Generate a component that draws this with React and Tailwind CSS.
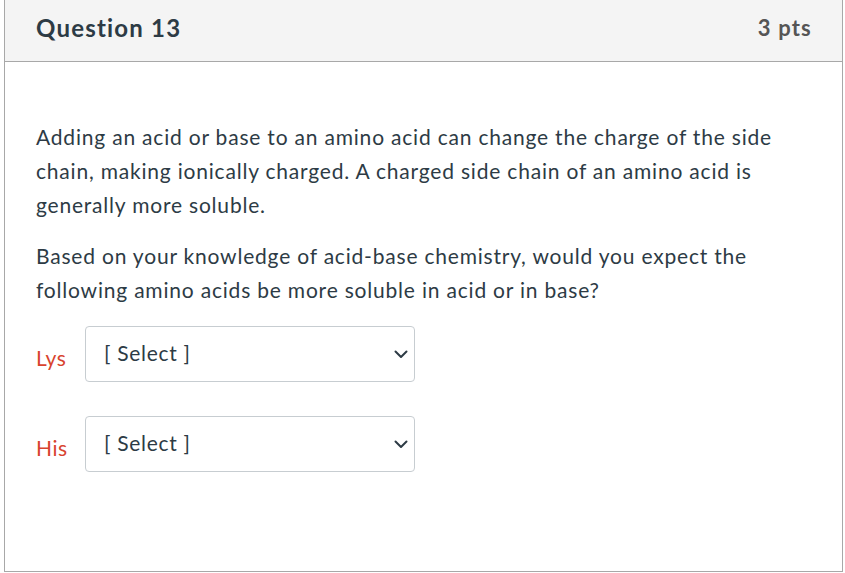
import React from "react";

function Chevron() {
  return (
    <svg width="16" height="16" viewBox="0 0 16 16" fill="none" stroke="#2d3b45" strokeWidth="2" strokeLinecap="round" strokeLinejoin="round">
      <path d="M2.5 5.5 L8 11 L13.5 5.5" />
    </svg>
  );
}

function Row({ label, className }) {
  return (
    <div className={"flex items-center " + className}>
      <span className="w-[49px] text-[21px] tracking-[0.6px] text-[#d8432e] mt-[7px]">{label}</span>
      <div className="flex w-[330px] h-[56px] items-center justify-between rounded-[4px] border border-[#c7cdd1] bg-white pl-[18px] pr-[5px]">
        <span className="text-[21px] tracking-[0.7px] text-[#2d3b45] mt-[-2px]">[ Select ]</span>
        <Chevron />
      </div>
    </div>
  );
}

export default function App() {
  return (
    <div className="w-[845px] h-[573px] bg-white pl-[4px] pr-[2px]" style={{ fontFamily: "Lato, 'Open Sans', sans-serif" }}>
      <div className="h-[572px] border-x border-b border-[#a8a8a8] flex flex-col">
        <div className="h-[62px] bg-[#f4f4f4] border-b border-[#a8a8a8] flex items-center justify-between pl-[31px] pr-[30px] pb-[6px]">
          <span className="text-[24px] font-bold tracking-[1.2px] text-[#2d3b45]">Question 13</span>
          <span className="text-[22px] font-bold tracking-[1.2px] text-[#555]">3 pts</span>
        </div>
        <div className="pl-[31px] pr-[40px] pt-[58px] text-[21px] tracking-[0.8px] leading-[34px] text-[#2d3b45]">
          <p>Adding an acid or base to an amino acid can change the charge of the side chain, making ionically charged. A charged side chain of an amino acid is generally more soluble.</p>
          <p className="mt-[17px]">Based on your knowledge of acid-base chemistry, would you expect the following amino acids be more soluble in acid or in base?</p>
          <Row label="Lys" className="mt-[19px]" />
          <Row label="His" className="mt-[34px]" />
        </div>
      </div>
    </div>
  );
}
